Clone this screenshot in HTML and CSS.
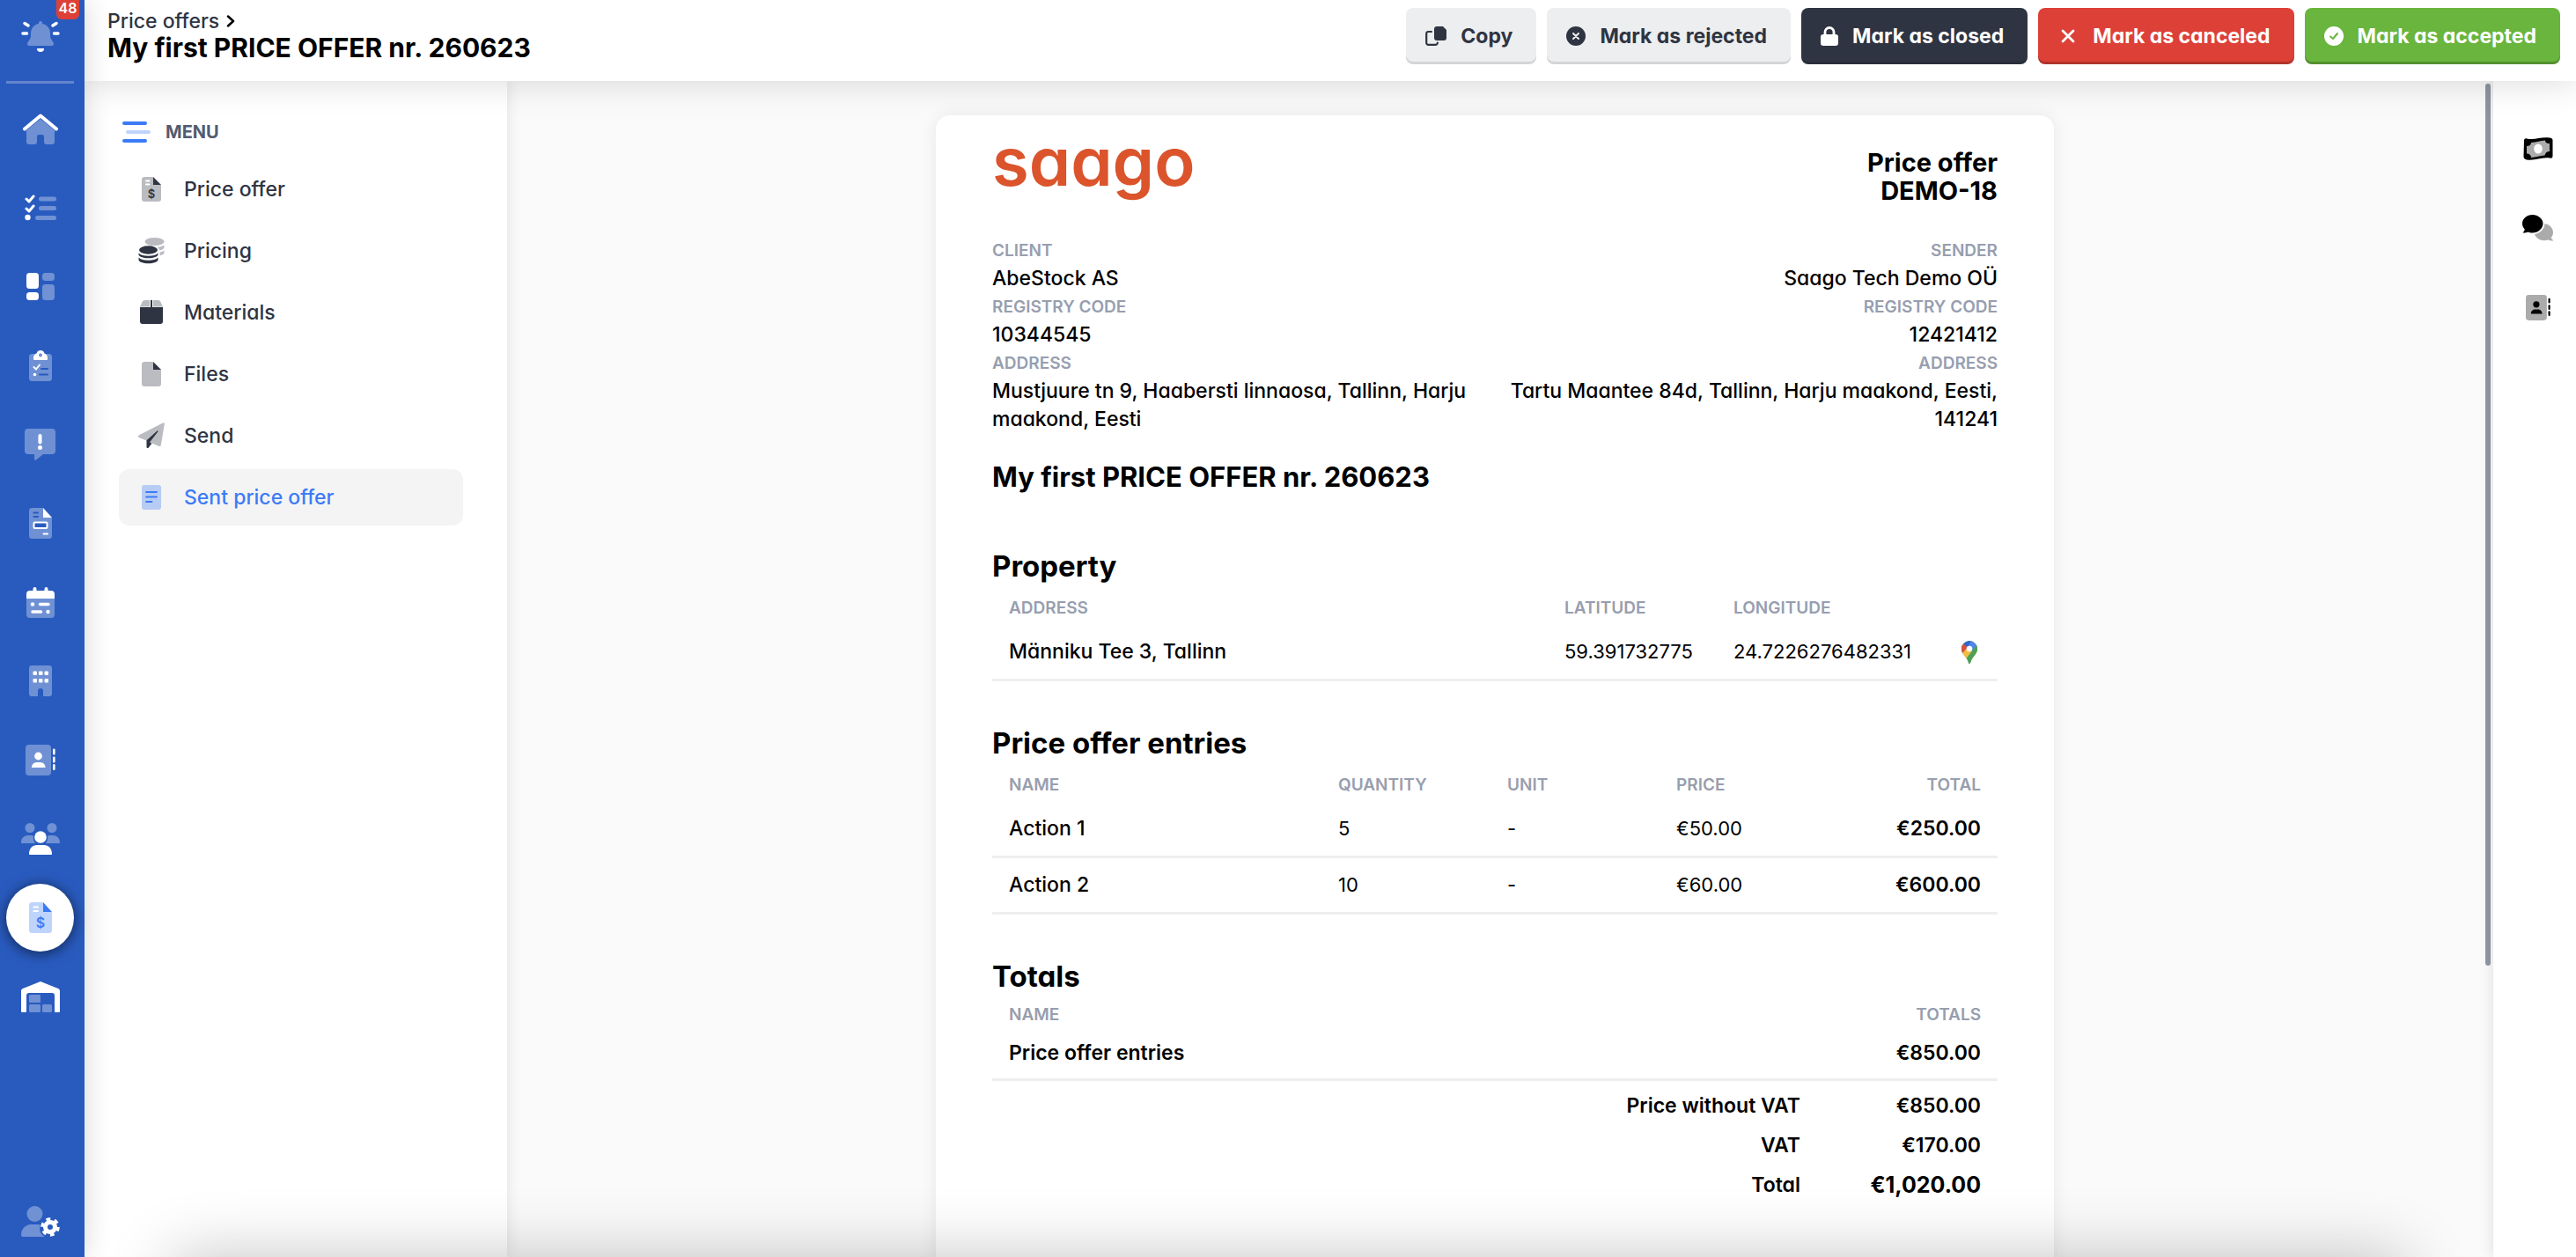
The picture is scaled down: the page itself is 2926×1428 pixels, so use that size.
FILE: index.html
```html
<!DOCTYPE html>
<html lang="en">
<head>
<meta charset="utf-8">
<title>My first PRICE OFFER nr. 260623</title>
<link rel="stylesheet" href="styles.css">
</head>
<body>

<div class="app">

  <nav class="rail" aria-label="Main">
    <a class="rail-bell" href="#" aria-label="Notifications">
      <svg width="44" height="36" viewBox="0 0 44 36">
        <path class="soft" d="M22 0c1.500 0 2 1 2 2v1c6 1 9 6 9 11v3c0 4 4 6 4 9 0 1-1 2-2 2H9c-1 0-2-1-2-2 0-3 4-5 4-9v-3c0-5 3-10 9-11V2c0-1 .5-2 2-2z"/>
        <path d="M18 31h8a4 4 0 0 1-8 0z"/>
        <path class="line" stroke-width="3.500" d="M4 2.500l4 2.500M2 14h4.500M40 2.500L36 5M42 14h-4.500"/>
      </svg>
      <span class="badge">48</span>
    </a>
    <div class="rail-list">
      <a class="rail-item" href="#" aria-label="Home">
        <svg width="40" height="35" viewBox="0 0 40 35">
          <path class="soft" d="M20 6l16 13v13a3 3 0 0 1-3 3h-6a3 3 0 0 1-3-3v-6a2 2 0 0 0-2-2h-4a2 2 0 0 0-2 2v6a3 3 0 0 1-3 3H7a3 3 0 0 1-3-3V19z"/>
          <path class="line" stroke-width="4" d="M2 17.500L20 2.500l18 15"/>
        </svg>
      </a>
      <a class="rail-item" href="#" aria-label="Tasks">
        <svg width="36" height="30" viewBox="0 0 36 30">
          <path class="line" stroke-width="3" d="M2 5l3 3 5-6M2 16l3 3 5-6"/>
          <circle cx="3.500" cy="26" r="3.200"/>
          <g class="soft"><rect x="16" y="2.500" width="20" height="5" rx="2.500"/><rect x="16" y="13" width="20" height="5" rx="2.500"/><rect x="12" y="24" width="24" height="5" rx="2.500"/></g>
        </svg>
      </a>
      <a class="rail-item" href="#" aria-label="Dashboard">
        <svg width="32" height="31" viewBox="0 0 32 31">
          <rect width="14" height="18" rx="3.500"/><rect y="22" width="14" height="9" rx="3.500"/>
          <g class="soft"><rect x="18" width="14" height="9" rx="3.500"/><rect x="18" y="13" width="14" height="18" rx="3.500"/></g>
        </svg>
      </a>
      <a class="rail-item" href="#" aria-label="Checklists">
        <svg width="26" height="35" viewBox="0 0 26 35">
          <rect class="soft" y="4" width="26" height="31" rx="3.500"/>
          <path fill-rule="evenodd" d="M13 0a4.500 4.500 0 0 1 4.300 3.200A6 6 0 0 1 21 9v1a1 1 0 0 1-1 1H6a1 1 0 0 1-1-1V9a6 6 0 0 1 3.700-5.800A4.500 4.500 0 0 1 13 0zm0 3.500a2 2 0 1 0 0 4 2 2 0 0 0 0-4z"/>
          <path class="line" stroke-width="2" d="M5.500 19l2.500 2.500 4-5"/>
          <circle cx="6.500" cy="27.500" r="1.800"/>
          <path class="cut" stroke-width="2.200" d="M14 21h7M12 27.500h9"/>
        </svg>
      </a>
      <a class="rail-item" href="#" aria-label="Issues">
        <svg width="35" height="36" viewBox="0 0 35 36">
          <path class="soft" d="M4 0h27a4 4 0 0 1 4 4v21a4 4 0 0 1-4 4H21l-8 6.500c-1 .5-2 0-2-1V29H4a4 4 0 0 1-4-4V4a4 4 0 0 1 4-4z"/>
          <path class="line" stroke-width="4" d="M17.500 8v7.500"/>
          <circle cx="17.500" cy="21.500" r="2.500"/>
        </svg>
      </a>
      <a class="rail-item" href="#" aria-label="Documents">
        <svg width="26" height="35" viewBox="0 0 26 35">
          <path class="soft" d="M3.500 0H16v11h10v20.500a3.500 3.500 0 0 1-3.500 3.500h-19A3.500 3.500 0 0 1 0 31.500v-28A3.500 3.500 0 0 1 3.500 0z"/>
          <path d="M16 0l10 11H16z"/>
          <path class="cut" stroke-width="2.200" d="M5.500 5.500h4.500M5.500 10h4.500"/>
          <rect class="cut-box" x="5.500" y="16.500" width="15" height="6.500" rx="1"/>
          <path class="line" stroke-width="2" d="M16.500 29.500H21"/>
        </svg>
      </a>
      <a class="rail-item" href="#" aria-label="Calendar">
        <svg width="32" height="35" viewBox="0 0 32 35">
          <path class="soft" d="M0 13h32v18a4 4 0 0 1-4 4H4a4 4 0 0 1-4-4z"/>
          <path d="M4 4h3.500V2a2 2 0 0 1 4 0v2h9V2a2 2 0 0 1 4 0v2H28a4 4 0 0 1 4 4v5H0V8a4 4 0 0 1 4-4z"/>
          <circle cx="7" cy="19.500" r="2.200"/><circle cx="24.500" cy="28" r="2.200"/>
          <path class="line" stroke-width="3.500" d="M15.500 19.500H25M7 28h9.500"/>
        </svg>
      </a>
      <a class="rail-item" href="#" aria-label="Properties">
        <svg width="26" height="35" viewBox="0 0 26 35">
          <path class="soft" d="M3 0h20a3 3 0 0 1 3 3v29a3 3 0 0 1-3 3h-7v-6a3 3 0 0 0-6 0v6H3a3 3 0 0 1-3-3V3a3 3 0 0 1 3-3z"/>
          <rect x="4.500" y="6.500" width="4.500" height="4.500" rx="1"/><rect x="11" y="6.500" width="4.500" height="4.500" rx="1"/><rect x="17.500" y="6.500" width="4.500" height="4.500" rx="1"/>
          <rect x="4.500" y="15" width="4.500" height="4.500" rx="1"/><rect x="11" y="15" width="4.500" height="4.500" rx="1"/><rect x="17.500" y="15" width="4.500" height="4.500" rx="1"/>
        </svg>
      </a>
      <a class="rail-item" href="#" aria-label="Contacts">
        <svg width="34" height="35" viewBox="0 0 34 35">
          <rect class="soft" width="29" height="35" rx="4"/>
          <circle cx="14.500" cy="13" r="4.400"/>
          <path d="M7 26c0-4 3-6 6-6h3.500c3 0 6 2 6 6z"/>
          <rect x="31" y="4.500" width="2.600" height="7" rx="1.300"/><rect x="31" y="13.500" width="2.600" height="7" rx="1.300"/><rect x="31" y="22" width="2.600" height="7" rx="1.300"/>
        </svg>
      </a>
      <a class="rail-item" href="#" aria-label="Team">
        <svg width="44" height="36" viewBox="0 0 44 36">
          <g class="soft">
            <circle cx="10" cy="5.500" r="5.500"/><circle cx="35" cy="5.500" r="5.500"/>
            <path d="M1 23c-.6 0-1-.4-1-1 0-5 3.500-8 8-8h3.500c1 0 1.800.2 2.500.5-.5 3.500.200 6 2 8.500z"/>
            <path d="M43 23c.6 0 1-.4 1-1 0-5-3.500-8-8-8h-3.500c-1 0-1.800.2-2.500.5.5 3.500-.2 6-2 8.500z"/>
          </g>
          <circle cx="22" cy="16" r="6.800"/>
          <path d="M9 35c0-6 4-10 9-10h8c5 0 9 4 9 10 0 .6-.4 1-1 1H10c-.6 0-1-.4-1-1z"/>
        </svg>
      </a>
      <a class="rail-item active" href="#" aria-label="Price offers" aria-current="page">
        <svg width="26" height="35" viewBox="0 0 26 35">
          <path class="soft" d="M3.500 0H16v11h10v20.500a3.500 3.500 0 0 1-3.500 3.500h-19A3.500 3.500 0 0 1 0 31.500v-28A3.500 3.500 0 0 1 3.500 0z"/>
          <path d="M16 0l10 11H16z"/>
          <path class="cut-white" stroke-width="2.200" d="M5.500 5.500h4.500M5.500 10h4.500"/>
          <text x="13" y="29" font-size="16">$</text>
        </svg>
      </a>
      <a class="rail-item" href="#" aria-label="Warehouse">
        <svg width="44" height="35" viewBox="0 0 44 35">
          <path d="M22 0l20 8c1.500.7 2 1.500 2 3v23a1 1 0 0 1-1 1h-4a1 1 0 0 1-1-1V16a3 3 0 0 0-3-3H9a3 3 0 0 0-3 3v18a1 1 0 0 1-1 1H1a1 1 0 0 1-1-1V11c0-1.500.5-2.300 2-3z"/>
          <g class="soft"><rect x="9" y="15" width="13" height="9" rx="1.500"/><rect x="9" y="26" width="13" height="9" rx="1.500"/><rect x="24" y="26" width="11" height="9" rx="1.500"/></g>
        </svg>
      </a>
    </div>
    <a class="rail-item rail-user" href="#" aria-label="Account settings">
      <svg width="44" height="36" viewBox="0 0 44 36">
        <g class="soft"><circle cx="15.500" cy="9" r="9"/><path d="M2 35c-1.200 0-2-.8-2-2 0-7 5-12 11-12h8c1 0 2 .2 3 .5-2 5-.5 10.500 5 13.500z"/></g>
        <circle cx="33" cy="24" r="5.500" fill="none" stroke="currentColor" stroke-width="5"/>
        <circle cx="33" cy="24" r="9" fill="none" stroke="currentColor" stroke-width="3.500" stroke-dasharray="4.700 4.720"/>
      </svg>
    </a>
  </nav>

  <div class="page">

    <header class="topbar">
      <div class="heading">
        <a class="crumb" href="#">Price offers
          <svg width="10" height="14" viewBox="0 0 10 14"><path class="line" stroke-width="2.500" d="M2 1.500L8 7l-6 5.500"/></svg>
        </a>
        <h1>My first PRICE OFFER nr. 260623</h1>
      </div>
      <div class="actions">
        <button class="btn" type="button">
          <svg width="24" height="22" viewBox="0 0 24 22"><path d="M13 0h7l4 4v9a3 3 0 0 1-3 3h-8a3 3 0 0 1-3-3V3a3 3 0 0 1 3-3z"/><path class="line" stroke-width="2.200" d="M7 6H3.500A2.200 2.200 0 0 0 1.200 8v10.500a2.200 2.200 0 0 0 2.300 2.300h8a2.200 2.200 0 0 0 2.300-2.300"/></svg>
          Copy
        </button>
        <button class="btn" type="button">
          <svg width="22" height="22" viewBox="0 0 22 22"><circle cx="11" cy="11" r="11"/><path class="knock" d="M8 8l6 6M14 8l-6 6"/></svg>
          Mark as rejected
        </button>
        <button class="btn btn-dark" type="button">
          <svg width="20" height="22" viewBox="0 0 20 22"><rect y="9" width="20" height="13" rx="3"/><path class="line" stroke-width="2.800" d="M5 10V6.500a5 5 0 0 1 10 0V10"/></svg>
          Mark as closed
        </button>
        <button class="btn btn-red" type="button">
          <svg width="24" height="22" viewBox="0 0 24 22"><path class="line" stroke-width="2.800" d="M6 5l12 12M18 5L6 17"/></svg>
          Mark as canceled
        </button>
        <button class="btn btn-green" type="button">
          <svg width="22" height="22" viewBox="0 0 22 22"><circle cx="11" cy="11" r="11"/><path class="knock" d="M7 11.500l3 2.500 5-6"/></svg>
          Mark as accepted
        </button>
      </div>
    </header>

    <div class="content">

      <aside class="sidebar">
        <div class="menu-head">
          <svg width="32" height="24" viewBox="0 0 32 24"><rect width="28" height="4" rx="2"/><rect class="soft" x="4" y="10" width="28" height="4" rx="2"/><rect y="20" width="28" height="4" rx="2"/></svg>
          MENU
        </div>
        <a class="menu-item" href="#">
          <svg width="30" height="30" viewBox="-4 -1 30 30">
            <path class="soft" d="M3 0h10v9h9v16a3 3 0 0 1-3 3H3a3 3 0 0 1-3-3V3a3 3 0 0 1 3-3z"/>
            <path d="M13 0l9 9h-9z"/>
            <path class="cut-white" stroke-width="2" d="M5 4.500h3.500M5 8.500h3.500"/>
            <text x="11" y="23.500" font-size="13">$</text>
          </svg>
          Price offer
        </a>
        <a class="menu-item" href="#">
          <svg width="30" height="30" viewBox="0 0 30 30">
            <g class="soft">
              <ellipse cx="18.500" cy="4.500" rx="11" ry="4.500"/>
              <path d="M29.500 8.500v2.500c0 1.500-2 2.800-5 3.500-.5-1.500-1.500-2.700-3-3.600 3.500-.300 6.500-1.200 8-2.400zM29.500 14.500V17c0 1.500-2 2.700-5 3.400v-3.600c2-.500 4-1.300 5-2.300z"/>
            </g>
            <ellipse cx="11.500" cy="14" rx="10.500" ry="4.700"/>
            <path d="M.5 17.500c2 2.200 6 3.200 11 3.200s9-1 11-3.200V19c0 2.500-5 4.300-11 4.300S.5 21.500.5 19zM.5 22.500c2 2.200 6 3.200 11 3.200s9-1 11-3.200V25c0 2.500-5 4.300-11 4.300S.5 27.500.5 25z"/>
          </svg>
          Pricing
        </a>
        <a class="menu-item" href="#">
          <svg width="30" height="30" viewBox="-2 -1 30 30">
            <path class="soft" d="M5.500 0H11v7.500H0L2.500 2c.6-1.300 1.600-2 3-2zM15 0h5.500c1.400 0 2.400.7 3 2L26 7.500H15z"/>
            <path d="M12 0h2v8h12v16a3 3 0 0 1-3 3H3a3 3 0 0 1-3-3V8h12z"/>
          </svg>
          Materials
        </a>
        <a class="menu-item" href="#">
          <svg width="30" height="30" viewBox="-4 -1 30 30">
            <path class="soft" d="M3 0h10v9h9v16a3 3 0 0 1-3 3H3a3 3 0 0 1-3-3V3a3 3 0 0 1 3-3z"/>
            <path d="M13 0l9 9h-9z"/>
          </svg>
          Files
        </a>
        <a class="menu-item" href="#">
          <svg width="30" height="30" viewBox="0 0 30 30">
            <path class="soft" d="M28 .5c1-.5 2 .2 1.800 1.300l-4 24c-.2 1-1.100 1.500-2 1.200l-7.800-3.200-3.500-1.500L22 10 9.500 20.500l-8.300-3.300c-1.400-.6-1.500-2.200-.2-3z"/>
            <path d="M21.500 9.500c.8-.5 1.300.2.800.9L13 22.500l2.500 1.200-3.700 4.800c-1 1-2.300.5-2.300-.8v-7.500z"/>
          </svg>
          Send
        </a>
        <a class="menu-item active" href="#" aria-current="page">
          <svg width="30" height="30" viewBox="-4 0 30 30">
            <rect class="soft" y="1" width="22" height="28" rx="3"/>
            <path class="line" stroke-width="1.800" d="M5 9h12M5 14.500h12M5 20h6.500"/>
          </svg>
          Sent price offer
        </a>
      </aside>

      <main class="viewer">
        <article class="paper">

          <div class="paper-head">
            <div class="logo">saago</div>
            <div class="doc-no">Price offer<br>DEMO-18</div>
          </div>

          <div class="parties">
            <dl>
              <dt>CLIENT</dt><dd>AbeStock AS</dd>
              <dt>REGISTRY CODE</dt><dd>10344545</dd>
              <dt>ADDRESS</dt><dd>Mustjuure tn 9, Haabersti linnaosa, Tallinn, Harju maakond, Eesti</dd>
            </dl>
            <dl class="sender">
              <dt>SENDER</dt><dd>Saago Tech Demo OÜ</dd>
              <dt>REGISTRY CODE</dt><dd>12421412</dd>
              <dt>ADDRESS</dt><dd>Tartu Maantee 84d, Tallinn, Harju maakond, Eesti, 141241</dd>
            </dl>
          </div>

          <h2 class="doc-title">My first PRICE OFFER nr. 260623</h2>

          <section>
            <h2>Property</h2>
            <table>
              <colgroup><col><col class="col"><col class="col-wide"><col class="col-icon"></colgroup>
              <thead>
                <tr><th>ADDRESS</th><th>LATITUDE</th><th>LONGITUDE</th><th></th></tr>
              </thead>
              <tbody>
                <tr>
                  <td class="name">Männiku Tee 3, Tallinn</td>
                  <td>59.391732775</td>
                  <td>24.7226276482331</td>
                  <td class="map">
                    <a href="#" aria-label="Open in maps">
                      <svg width="18" height="26" viewBox="0 0 18 26">
                        <clipPath id="pin"><path d="M9 0a9 9 0 0 1 9 9c0 3-1.200 5-3 7.300-2 2.600-3.800 4.700-4.800 8.400-.4 1.700-2 1.700-2.400 0-1-3.700-2.800-5.800-4.800-8.400C1.200 14 0 12 0 9a9 9 0 0 1 9-9z"/></clipPath>
                        <g clip-path="url(#pin)">
                          <path fill="#4f9f55" d="M0 0h18v26H0z"/>
                          <path fill="#f2bd42" d="M-1 16L7 7l5 5L2 24z"/>
                          <path fill="#d9503f" d="M-1 1l7 5-7 10z"/>
                          <path fill="#d9503f" d="M2 3l5 4.500L1 14l-2-8z"/>
                          <path fill="#2f66cf" d="M2 3l9-5v4L7 7.500z"/>
                          <path fill="#5186ec" d="M11-1l8 5-8 8-4-4.500z"/>
                          <path fill="#4f9f55" d="M18 3.500v12L9 26 8 17z"/>
                        </g>
                        <circle cx="9" cy="9" r="3.300" fill="#fff"/>
                      </svg>
                    </a>
                  </td>
                </tr>
              </tbody>
            </table>
          </section>

          <section>
            <h2>Price offer entries</h2>
            <table>
              <colgroup><col><col class="col"><col class="col"><col class="col"><col class="col"></colgroup>
              <thead>
                <tr><th>NAME</th><th>QUANTITY</th><th>UNIT</th><th>PRICE</th><th class="sum">TOTAL</th></tr>
              </thead>
              <tbody>
                <tr><td class="name">Action 1</td><td>5</td><td>-</td><td>€50.00</td><td class="sum">€250.00</td></tr>
                <tr><td class="name">Action 2</td><td>10</td><td>-</td><td>€60.00</td><td class="sum">€600.00</td></tr>
              </tbody>
            </table>
          </section>

          <section class="totals">
            <h2>Totals</h2>
            <table>
              <colgroup><col><col class="col"></colgroup>
              <thead>
                <tr><th>NAME</th><th class="sum">TOTALS</th></tr>
              </thead>
              <tbody>
                <tr><td class="strong">Price offer entries</td><td class="sum">€850.00</td></tr>
              </tbody>
            </table>
            <dl class="summary">
              <dt>Price without VAT</dt><dd>€850.00</dd>
              <dt>VAT</dt><dd>€170.00</dd>
              <dt>Total</dt><dd class="grand">€1,020.00</dd>
            </dl>
          </section>

        </article>
      </main>
      <div class="thumb"></div>

      <aside class="tools">
        <a href="#" aria-label="Payments">
          <svg width="34" height="26" viewBox="0 0 34 26">
            <path d="M1 4c0-2 1-3 3-2.600C14 3.500 20-1 30 .6c2 .3 3.500 1 3.500 3V21c0 2-1 3-3 2.600C20 22 14 27 4 25.400c-2-.3-3.500-1.400-3.500-3.400z"/>
            <path fill="#acacac" d="M9 6c6 0 10-2.500 16-2.500C25 6 27 7.500 30 7v9c-3 0-5 2-5.500 4.500C19 20.500 15 23 9 23c0-3-2-4.500-5-4.500V10c3 0 5-1.500 5-4z"/>
            <ellipse cx="17" cy="13" rx="4.800" ry="5.500" fill="#fff"/>
          </svg>
        </a>
        <a href="#" aria-label="Comments">
          <svg width="36" height="30" viewBox="0 0 36 30">
            <path class="soft" d="M25.500 10C31 11 35 15 35 20c0 2.500-1 4.500-2.300 6 .5 1.200 1.500 2.200 2.800 3.200-2 .6-4 .3-6-.7-6.500 2-13.500-.5-15.500-6.500C20 21 25 17 25.500 10z"/>
            <path d="M11.500 0C18 0 23.500 4.500 23.500 10S18 20.500 11.500 20.500c-1.800 0-3.600-.4-5-1-2 1-4 1.300-6 .7 1.200-1 2-2 2.300-3.400C1 14.500 0 12.500 0 10 0 4.500 5 0 11.500 0z"/>
          </svg>
        </a>
        <a href="#" aria-label="Contact">
          <svg width="28" height="29" viewBox="0 0 34 35">
            <rect class="soft" width="29" height="35" rx="4"/>
            <circle cx="14.500" cy="13" r="4.400"/>
            <path d="M7 26c0-4 3-6 6-6h3.500c3 0 6 2 6 6z"/>
            <rect x="31" y="4.500" width="2.600" height="7" rx="1.300"/><rect x="31" y="13.500" width="2.600" height="7" rx="1.300"/><rect x="31" y="22" width="2.600" height="7" rx="1.300"/>
          </svg>
        </a>
      </aside>

      <div class="bottom-shade"></div>
    </div>
  </div>
</div>

</body>
</html>
```
FILE: styles.css
```css
* {
  box-sizing: border-box;
}

body {
  margin: 0;
  background: #fafafa;
  color: #000;
  font-family: Inter, "Open Sans", sans-serif;
  font-size: 23px;
  font-weight: 500;
  line-height: 32px;
  /* single-storey a */
  font-feature-settings: "cv11" 1;
}

a {
  color: inherit;
  text-decoration: none;
}

h1,
h2,
dl,
dd {
  margin: 0;
}

/* Icons */
svg {
  display: block;
  flex: none;
  fill: currentColor;
}

svg text {
  font-weight: 600;
  text-anchor: middle;
}

.soft {
  opacity: 0.33;
}

.line,
.cut,
.cut-white,
.knock {
  fill: none;
  stroke: currentColor;
  stroke-linecap: round;
  stroke-linejoin: round;
}

.cut {
  stroke: #295bbf;
}

.cut-white {
  stroke: #fff;
}

.cut-box {
  fill: #295bbf;
  stroke: #fff;
  stroke-width: 2;
}

.knock {
  stroke: #edeef0;
  stroke-width: 2;
}

/* Layout */
.app {
  display: flex;
  height: 100vh;
  overflow: hidden;
}

.page {
  flex: 1;
  min-width: 0;
  display: flex;
  flex-direction: column;
}

.content {
  position: relative;
  flex: 1;
  min-height: 0;
  display: flex;
  overflow: hidden;
}

/* Blue rail */
.rail {
  position: relative;
  z-index: 3;
  flex: none;
  width: 96px;
  padding: 0 12px 0 7px;
  display: flex;
  flex-direction: column;
  background: #295bbf;
  color: #fff;
  box-shadow: 0 0 32px rgba(0, 0, 0, 0.16);
}

.rail-bell {
  position: relative;
  height: 95px;
  padding-top: 24px;
  border-bottom: 3px solid #6584cc;
  display: flex;
  justify-content: center;
}

.badge {
  position: absolute;
  top: 0;
  right: -6px;
  width: 26px;
  height: 22px;
  border-radius: 0 0 6px 6px;
  background: #dd4037;
  font-size: 16px;
  font-weight: 600;
  line-height: 19px;
  text-align: center;
}

.rail-list {
  flex: 1;
  padding-top: 13px;
  display: flex;
  flex-direction: column;
  justify-content: space-between;
}

.rail-item {
  width: 77px;
  height: 77px;
  border-radius: 50%;
  display: flex;
  align-items: center;
  justify-content: center;
}

.rail-item.active {
  background: #fff;
  color: #3c7bf6;
  box-shadow: 0 2px 16px rgba(0, 0, 0, 0.6);
}

.rail-user {
  margin-top: 178px;
  margin-bottom: 2px;
}

/* Top bar */
.topbar {
  position: relative;
  z-index: 2;
  height: 92px;
  padding: 9px 18px 0 26px;
  display: flex;
  justify-content: space-between;
  background: #fff;
  box-shadow: 0 0 40px rgba(0, 0, 0, 0.16);
}

.crumb {
  display: flex;
  align-items: center;
  gap: 8px;
  line-height: 30px;
  color: #2f3442;
}

.crumb svg {
  color: #000;
}

h1 {
  font-size: 30px;
  font-weight: 700;
  line-height: 30px;
}

.actions {
  display: flex;
  gap: 12px;
}

.btn {
  height: 64px;
  padding: 0 27px 0 22px;
  border: 0;
  border-radius: 8px;
  display: flex;
  align-items: center;
  gap: 16px;
  background: #edeef0;
  box-shadow: inset 0 -3px rgba(0, 0, 0, 0.1);
  color: #2f3442;
  font: inherit;
  font-weight: 700;
}

.btn-dark {
  background: #2f3442;
  color: #fff;
}

.btn-red {
  background: #dd4037;
  color: #fff;
  box-shadow: inset 0 -3px rgba(0, 0, 0, 0.2);
}

.btn-green {
  background: #69b53d;
  color: #fff;
  box-shadow: inset 0 -3px rgba(0, 0, 0, 0.2);
}

.btn-green .knock {
  stroke: #69b53d;
}

/* Side menu */
.sidebar {
  position: relative;
  flex: none;
  width: 480px;
  padding: 38px 50px 0 39px;
  display: flex;
  flex-direction: column;
  gap: 6px;
  background: #fff;
  box-shadow: 0 0 16px rgba(0, 0, 0, 0.1);
}

.menu-head {
  height: 40px;
  margin-bottom: 7px;
  padding-left: 4px;
  display: flex;
  align-items: center;
  gap: 17px;
  color: #535b71;
  font-size: 20px;
  font-weight: 700;
}

.menu-head svg {
  color: #3c7bf6;
}

.menu-item {
  height: 64px;
  padding-left: 22px;
  border-radius: 12px;
  display: flex;
  align-items: center;
  gap: 22px;
  color: #2f3442;
}

.menu-item.active {
  background: #f4f4f4;
  color: #3c7bf6;
}

/* Document viewer */
.viewer {
  flex: 1;
  min-width: 0;
  padding: 39px 12px 0 0;
  overflow: auto;
  scrollbar-width: none;
}

.paper {
  max-width: 1270px;
  min-height: 100vh;
  margin: 0 auto;
  padding: 38px 64px;
  border-radius: 16px;
  background: #fff;
  box-shadow: 0 0 20px rgba(0, 0, 0, 0.08);
}

.thumb {
  position: absolute;
  top: 3px;
  right: 97px;
  width: 6px;
  height: 75%;
  border-radius: 3px;
  background: #9097a5;
}

.paper-head {
  margin-bottom: 37px;
  display: flex;
  align-items: flex-start;
  justify-content: space-between;
}

.logo {
  color: #db542c;
  font-size: 76px;
  font-weight: 600;
  line-height: 28px;
}

.doc-no {
  font-size: 29px;
  font-weight: 700;
  line-height: 32px;
  text-align: right;
}

.parties {
  display: grid;
  grid-template-columns: 1fr 1fr;
}

.parties dt,
th {
  color: #979eae;
  font-size: 19px;
  font-weight: 600;
  line-height: 30px;
}

.parties dd {
  margin-bottom: 2px;
}

.sender {
  text-align: right;
}

h2 {
  font-size: 33px;
  font-weight: 700;
  line-height: 40px;
}

.doc-title {
  margin: 28px 0 61px;
  font-size: 31px;
}

section {
  margin-bottom: 50px;
}

table {
  width: 100%;
  margin-top: 13px;
  border-collapse: collapse;
  table-layout: fixed;
}

.col {
  width: 192px;
}

.col-wide {
  width: 255px;
}

.col-icon {
  width: 64px;
}

th {
  padding: 0 19px 4px;
  text-align: left;
}

td {
  padding: 14px 19px 15px;
  border-bottom: 3px solid #edeef0;
  font-size: 22px;
  font-weight: 400;
}

td.name {
  font-size: 23px;
  font-weight: 500;
}

td.strong,
td.sum {
  font-size: 23px;
  font-weight: 600;
}

td.map {
  padding: 0;
}

.map svg {
  margin: 0 auto;
}

th.sum,
td.sum {
  text-align: right;
}

.totals table {
  margin-top: 9px;
}

.totals th {
  padding-bottom: 0;
}

.totals td {
  padding: 12px 19px 13px;
}

.summary {
  padding: 6px 19px 0;
  display: grid;
  grid-template-columns: 1fr 205px;
  font-weight: 600;
  line-height: 45px;
  text-align: right;
}

.summary .grand {
  font-size: 25px;
  font-weight: 700;
}

/* Right tools */
.tools {
  flex: none;
  position: relative;
  z-index: 1;
  width: 94px;
  padding: 32px 0 0 8px;
  display: flex;
  flex-direction: column;
  align-items: center;
  background: #fff;
  box-shadow: 0 0 16px rgba(0, 0, 0, 0.12);
}

.tools a {
  height: 90px;
  display: flex;
  align-items: center;
}

/* Shade rising from below the window, over menu and document */
.bottom-shade {
  position: absolute;
  top: 100%;
  left: 100px;
  right: 194px;
  height: 100px;
  box-shadow: 0 0 76px rgba(0, 0, 0, 0.24);
}
```
